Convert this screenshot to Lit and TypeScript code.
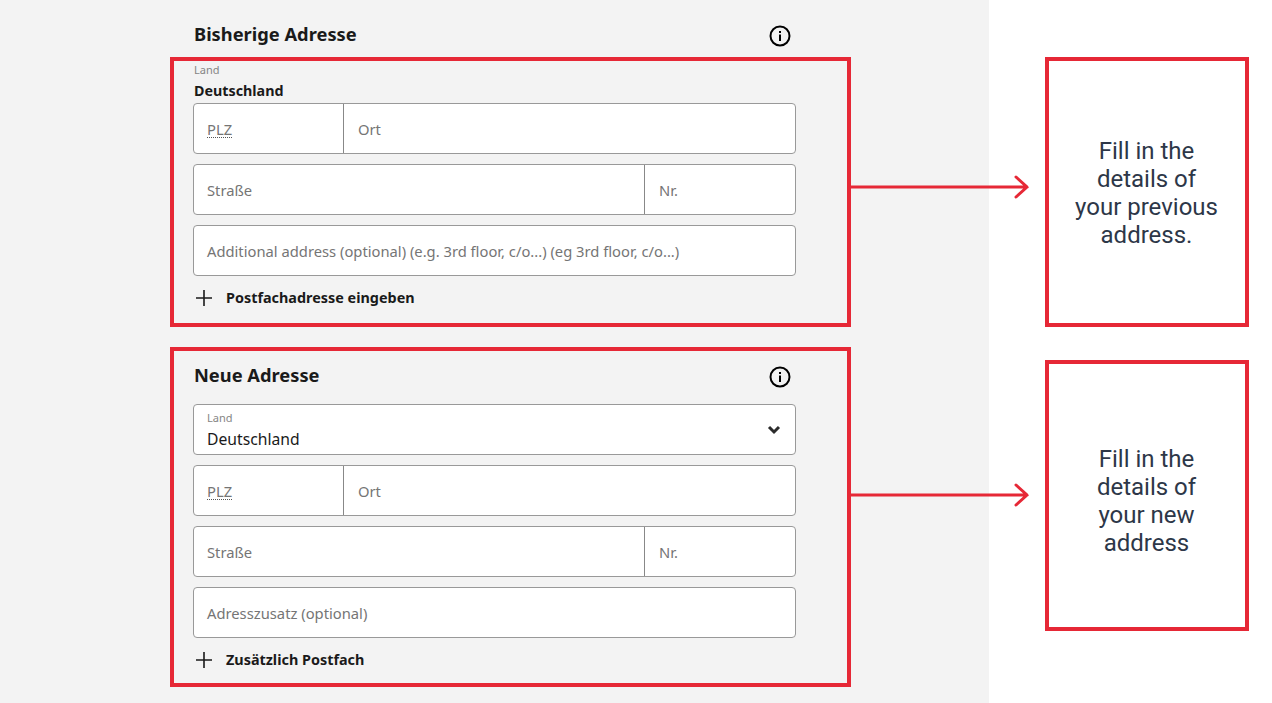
import { LitElement, html, css } from "lit";
import { customElement } from "lit/decorators.js";

const info = html`<svg class="info" width="22" height="22" viewBox="0 0 22 22" aria-hidden="true"><circle cx="11" cy="11" r="9.5" fill="none" stroke="#000" stroke-width="2"/><rect x="10" y="9.5" width="2" height="6.5" fill="#000"/><rect x="10" y="6" width="2" height="2" fill="#000"/></svg>`;
const plus = html`<svg class="plus" width="16" height="16" viewBox="0 0 16 16" aria-hidden="true"><path d="M8 0v16M0 8h16" stroke="#1a1a1a" stroke-width="1.6" fill="none"/></svg>`;
const chevron = html`<svg class="chev" width="14" height="10" viewBox="0 0 14 10" aria-hidden="true"><path d="M2 2l5 5 5-5" stroke="#2b2b2b" stroke-width="3" fill="none"/></svg>`;
const arrow = html`<svg class="arrow" width="180" height="24" viewBox="0 0 180 24" aria-hidden="true"><path d="M0 12h176M165 2l11 10-11 10" stroke="#e62836" stroke-width="3" fill="none" stroke-linecap="round"/></svg>`;

@customElement("app-root")
export class AppRoot extends LitElement {
  static styles = css`
    :host { display: block; width: 1272px; height: 703px; overflow: hidden; background: #fff; font-family: "Noto Sans", "Open Sans", sans-serif; color: #1a1a1a; }
    .page { display: flex; height: 703px; }
    .panel { width: 989px; flex: none; background: #f3f3f3; padding-left: 170px; box-sizing: border-box; }
    .side { padding: 57px 0 0 56px; display: flex; flex-direction: column; gap: 33px; }
    .frame { position: relative; box-sizing: border-box; width: 681px; border: 4px solid #e62836; padding: 0 51px 0 19px; }
    .f1 { height: 270px; }
    .f2 { height: 340px; margin-top: 20px; }
    .head { display: flex; align-items: center; justify-content: space-between; margin-left: 24px; width: 597px; height: 57px; box-sizing: border-box; padding-top: 10px; }
    .f2 .head { margin-left: 1px; width: 597px; height: 53px; padding-top: 0; padding-bottom: 5px; }
    h2 { margin: 0; font-size: 18.3px; line-height: 24px; font-weight: 700; }
    .info { display: block; margin-top: 4px; }
    .land { font-size: 11px; line-height: 14px; color: #858585; padding: 2px 0 0 1px; }
    .value { font-size: 14.3px; line-height: 20px; font-weight: 700; margin: 4px 0 2px 1px; }
    .rows { display: flex; flex-direction: column; gap: 10px; }
    .field { display: flex; height: 51px; box-sizing: border-box; background: #fff; border: 1px solid #999; border-radius: 4px; font-size: 14.75px; color: #757575; }
    .seg { display: flex; align-items: center; padding: 1px 0 0 14px; flex: 1; min-width: 0; }
    .seg:first-child { padding-left: 13px; }
    .seg + .seg { border-left: 1px solid #888; }
    .plz { flex: none; width: 149px; box-sizing: border-box; }
    .nr { flex: none; width: 151px; box-sizing: border-box; }
    .dotted { border-bottom: 1px dotted #555; line-height: 16px; }
    .select { position: relative; flex-direction: column; justify-content: flex-start; padding: 6px 0 0 13px; }
    .select small { font-size: 11px; line-height: 13px; color: #858585; }
    .select span { font-size: 15.7px; line-height: 20px; color: #1a1a1a; margin-top: 5px; }
    .chev { position: absolute; right: 14px; top: 20px; }
    .link { display: flex; align-items: center; gap: 14px; margin: 12px 0 0 3px; font-size: 14.4px; line-height: 20px; font-weight: 700; }
    .plus { display: block; }
    .arrow { position: absolute; left: 677px; top: 114px; }
    .f2 .arrow { top: 132px; }
    .note { box-sizing: border-box; width: 204px; border: 4px solid #e62836; padding-right: 1px; text-align: center; font-family: Roboto, sans-serif; font-size: 24px; line-height: 28px; color: #2d3748; }
    .n1 { height: 270px; padding-top: 76px; }
    .n2 { height: 271px; padding-top: 81px; }
  `;

  render() {
    return html`<div class="page">
      <div class="panel">
        <div class="head"><h2>Bisherige Adresse</h2>${info}</div>
        <section class="frame f1">
          <div class="land">Land</div>
          <div class="value">Deutschland</div>
          <div class="rows">
            <div class="field"><div class="seg plz"><span class="dotted">PLZ</span></div><div class="seg">Ort</div></div>
            <div class="field"><div class="seg">Straße</div><div class="seg nr">Nr.</div></div>
            <div class="field"><div class="seg">Additional address (optional) (e.g. 3rd floor, c/o...) (eg 3rd floor, c/o...)</div></div>
          </div>
          <div class="link">${plus}<span>Postfachadresse eingeben</span></div>
          ${arrow}
        </section>
        <section class="frame f2">
          <div class="head"><h2>Neue Adresse</h2>${info}</div>
          <div class="rows">
            <div class="field select"><small>Land</small><span>Deutschland</span>${chevron}</div>
            <div class="field"><div class="seg plz"><span class="dotted">PLZ</span></div><div class="seg">Ort</div></div>
            <div class="field"><div class="seg">Straße</div><div class="seg nr">Nr.</div></div>
            <div class="field"><div class="seg">Adresszusatz (optional)</div></div>
          </div>
          <div class="link">${plus}<span>Zusätzlich Postfach</span></div>
          ${arrow}
        </section>
      </div>
      <div class="side">
        <div class="note n1">Fill in the<br />details of<br />your previous<br />address.</div>
        <div class="note n2">Fill in the<br />details of<br />your new<br />address</div>
      </div>
    </div>`;
  }
}
